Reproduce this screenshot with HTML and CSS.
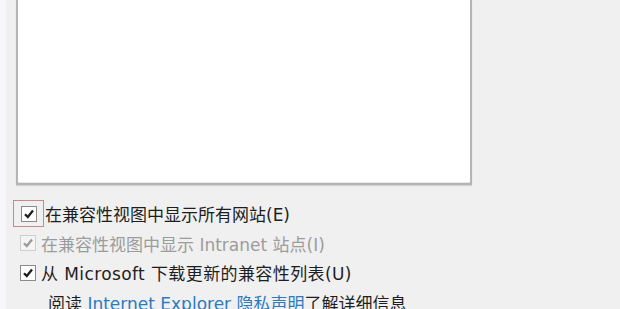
FILE: index.html
```html
<!DOCTYPE html>
<html lang="zh">
<head>
<meta charset="utf-8">
<link rel="stylesheet" href="styles.css">
</head>
<body>
<div class="page">
  <div class="strip"></div>
  <div class="main">
    <div class="listbox"></div>
    <div class="options">
      <div class="row row-first">
        <span class="focus"><span class="cb on"><svg viewBox="0 0 14 14"><path d="M3 7.2 L5.8 10 L11 3.6" /></svg></span></span>
        <span class="label">在兼容性视图中显示所有网站(E)</span>
      </div>
      <div class="row disabled">
        <span class="cb dis"><svg viewBox="0 0 14 14"><path d="M3 7.2 L5.8 10 L11 3.6" /></svg></span>
        <span class="label">在兼容性视图中显示 Intranet 站点(I)</span>
      </div>
      <div class="row">
        <span class="cb on"><svg viewBox="0 0 14 14"><path d="M3 7.2 L5.8 10 L11 3.6" /></svg></span>
        <span class="label wide">从 Microsoft 下载更新的兼容性列表(U)</span>
      </div>
      <div class="row info">
        <span class="label">阅读 <a class="link">Internet Explorer 隐私声明</a>了解详细信息</span>
      </div>
    </div>
  </div>
</div>
</body>
</html>
```
FILE: styles.css
```css
html, body {
  margin: 0;
  padding: 0;
  background: #f0f0f0;
}
.page {
  display: flex;
  width: 620px;
  height: 309px;
  overflow: hidden;
  font-family: "DejaVu Sans", "Noto Sans CJK SC", sans-serif;
  font-size: 17px;
  color: #1e1e1e;
}
.strip {
  width: 6px;
  background: #f6f6fb;
  flex: none;
}
.main {
  padding-left: 10px;
  flex: 1;
}
.listbox {
  width: 452px;
  height: 183px;
  background: #fff;
  border: 2px solid #b4b4b4;
  border-top: none;
  box-shadow: 0 1px 1px rgba(0,0,0,0.12), inset 0 -1px 0 #e8e8e8;
}
.options {
  display: flex;
  flex-direction: column;
  padding-top: 14px;
}
.row {
  display: flex;
  align-items: center;
  height: 29.5px;
  padding-left: 4px;
}
.row-first {
  padding-left: 0;
  margin-left: -3px;
}
.focus {
  display: flex;
  align-items: center;
  justify-content: center;
  width: 31px;
  height: 27px;
  border: 1px solid #c48a92;
  box-sizing: border-box;
  margin-right: 1px;
}
.cb {
  width: 16px;
  height: 16px;
  box-sizing: border-box;
  border: 1px solid #8a8a8a;
  background: #fff;
  display: flex;
  align-items: center;
  justify-content: center;
  margin-right: 5px;
  flex: none;
}
.focus .cb { margin-right: 0; }
.cb svg {
  width: 14px;
  height: 14px;
}
.cb svg path {
  fill: none;
  stroke: #1e1e1e;
  stroke-width: 2.3;
}
.cb.dis {
  border-color: #cfcfcf;
  background: #f4f4f4;
}
.cb.dis svg path { stroke: #9a9a9a; }
.disabled .label { color: #9c9c9c; }
.info { padding-left: 32px; }
.link { color: #2b7bc0; text-decoration: none; }
.label { white-space: nowrap; }
.wide { letter-spacing: 0.4px; }
```
